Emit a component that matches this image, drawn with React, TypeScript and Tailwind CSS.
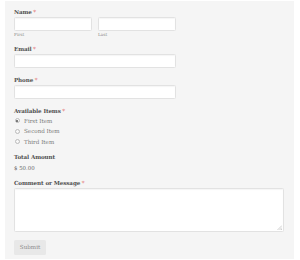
import React from "react";

const Req = () => <span className="text-[#e05a5a] font-normal ml-[1.5px]">*</span>;

const Label = ({ children, className = "" }: { children: React.ReactNode; className?: string }) => (
  <div className={`h-[8px] leading-[8px] text-[5.6px] font-bold tracking-[-0.1px] text-[#505050] whitespace-nowrap ${className}`}>{children}</div>
);

const Input = ({ className = "" }: { className?: string }) => (
  <div className={`h-[14px] bg-white border border-[#e2e2e2] rounded-[1.5px] shadow-[inset_0_1px_1px_rgba(0,0,0,0.04)] ${className}`} />
);

const Radio = ({ checked, label }: { checked?: boolean; label: string }) => (
  <div className="h-[10.5px] flex items-center">
    <div className="ml-[0.5px] w-[5px] h-[5px] rounded-full border-[0.5px] border-[#bbb] bg-[#f8f8f8] flex items-center justify-center">
      {checked && <div className="w-[2.2px] h-[2.2px] rounded-full bg-[#555]" />}
    </div>
    <span className="ml-[4.5px] text-[5.6px] leading-[8px] text-[#777]">{label}</span>
  </div>
);

export default function App() {
  return (
    <div className="w-[300px] h-[260px] bg-white overflow-hidden" style={{ fontFamily: '"DejaVu Serif", "Liberation Serif", serif' }}>
      <div className="ml-[5px] mt-[1px] w-[289px] h-[258px] bg-[#f5f5f5] pl-[9px] pt-[7px] flex flex-col">
        <Label>Name<Req /></Label>
        <div className="mt-[1px] flex gap-[6px]">
          <div className="w-[78px] flex flex-col">
            <Input />
            <div className="h-[8px] leading-[8px] text-[4.2px] text-[#888]">First</div>
          </div>
          <div className="w-[78px] flex flex-col">
            <Input />
            <div className="h-[8px] leading-[8px] text-[4.2px] text-[#888]">Last</div>
          </div>
        </div>
        <Label className="mt-[6px]">Email<Req /></Label>
        <Input className="mt-[1px] w-[162px]" />
        <Label className="mt-[8px]">Phone<Req /></Label>
        <Input className="mt-[1px] w-[162px]" />
        <Label className="mt-[8px]">Available Items<Req /></Label>
        <div className="mt-[0.5px] flex flex-col">
          <Radio checked label="First Item" />
          <Radio label="Second Item" />
          <Radio label="Third Item" />
        </div>
        <Label className="mt-[6px]">Total Amount</Label>
        <div className="mt-[3px] h-[8px] leading-[8px] text-[5.4px] text-[#666]">$ 50.00</div>
        <Label className="mt-[7px]">Comment or Message<Req /></Label>
        <div className="relative mt-[1px] w-[270px] h-[44px] bg-white border border-[#e2e2e2] rounded-[1.5px] shadow-[inset_0_1px_1px_rgba(0,0,0,0.04)]">
          <svg className="absolute right-[1px] bottom-[1px]" width="5" height="5" viewBox="0 0 5 5">
            <path d="M5 0.5 L0.5 5 M5 2.5 L2.5 5 M5 4 L4 5" stroke="#bbb" strokeWidth="0.7" />
          </svg>
        </div>
        <div className="mt-[8px] w-[32px] h-[15px] bg-[#e8e8e8] rounded-[1.5px] flex items-center justify-center text-[5.6px] text-[#888]">
          Submit
        </div>
      </div>
    </div>
  );
}
